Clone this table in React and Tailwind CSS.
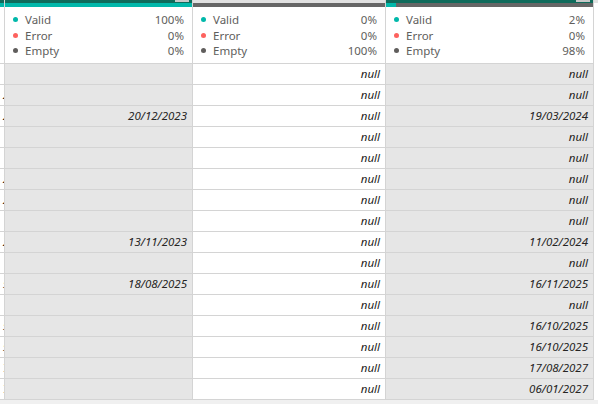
import React from 'react';

const font = { fontFamily: '"Noto Sans", "Open Sans", sans-serif' };

const col1 = ['', '', '20/12/2023', '', '', '', '', '', '13/11/2023', '', '18/08/2025', '', '', '', '', ''];
const col3 = [
  'null', 'null', '19/03/2024', 'null', 'null', 'null', 'null', 'null',
  '11/02/2024', 'null', '16/11/2025', 'null', '16/10/2025', '16/10/2025', '17/08/2027', '06/01/2027',
];
const edge = ['', '2', '2', '', '', '2', '2', '', '2', '', '5', '', '5', '5', '7', '7'];

const Stat = ({ dot, label, value }) => (
  <div className="flex items-center leading-[15.5px]">
    <span className={`mr-[7px] h-[5px] w-[5px] rounded-full ${dot}`} />
    <span className="flex-1">{label}</span>
    <span>{value}</span>
  </div>
);

const Column = ({ width, selected, bar, stats, cells }) => (
  <div className={`flex shrink-0 flex-col border-r border-[#d4d4d4] ${width}`}>
    <div className={`relative h-[3px] ${selected ? 'bg-[#0f6b5b]' : 'bg-[#e1e1e1]'}`}>
      {selected && <div className="absolute right-[3px] top-0 h-[2px] w-[14px] bg-[#c8c8c8]" />}
    </div>
    <div className="flex h-[4px] bg-[#666666]">{bar}</div>
    <div className="h-[57px] border-b border-[#d4d4d4] bg-white pl-[8px] pr-[8px] pt-[5px] text-[11.5px] text-[#605e5c]">
      {stats}
    </div>
    {cells.map((text, i) => (
      <div
        key={i}
        className={`flex h-[21px] items-center justify-end border-b border-[#d4d4d4] pr-[5px] text-[11.5px] italic text-[#252423] ${
          selected ? 'bg-[#e6e6e6]' : 'bg-white'
        }`}
      >
        {text}
      </div>
    ))}
  </div>
);

export default function App() {
  return (
    <div className="flex h-[404px] w-[598px] flex-col overflow-hidden bg-white" style={font}>
      <div className="flex">
        <div className="flex w-[5px] shrink-0 flex-col overflow-hidden border-r border-[#d4d4d4]">
          <div className="h-[3px] bg-[#0f6b5b]" />
          <div className="h-[4px] bg-[#01b8aa]" />
          <div className="h-[57px] border-b border-[#d4d4d4]" />
          {edge.map((d, i) => (
            <div
              key={i}
              className="flex h-[21px] items-center justify-end overflow-hidden border-b border-[#d4d4d4] pr-0 text-[11.5px] italic text-[#252423]"
            >
              <span className="-mr-[5px]">{d}</span>
            </div>
          ))}
        </div>

        <Column
          width="w-[188px]"
          selected
          bar={<div className="h-full w-full bg-[#01b8aa]" />}
          stats={
            <>
              <Stat dot="bg-[#01b8aa]" label="Valid" value="100%" />
              <Stat dot="bg-[#fd625e]" label="Error" value="0%" />
              <Stat dot="bg-[#605e5c]" label="Empty" value="0%" />
            </>
          }
          cells={col1}
        />

        <Column
          width="w-[193px]"
          bar={null}
          stats={
            <>
              <Stat dot="bg-[#01b8aa]" label="Valid" value="0%" />
              <Stat dot="bg-[#fd625e]" label="Error" value="0%" />
              <Stat dot="bg-[#605e5c]" label="Empty" value="100%" />
            </>
          }
          cells={Array(16).fill('null')}
        />

        <Column
          width="w-[208px]"
          selected
          bar={<div className="h-full w-[10px] bg-[#01b8aa]" />}
          stats={
            <>
              <Stat dot="bg-[#01b8aa]" label="Valid" value="2%" />
              <Stat dot="bg-[#fd625e]" label="Error" value="0%" />
              <Stat dot="bg-[#605e5c]" label="Empty" value="98%" />
            </>
          }
          cells={col3}
        />

        <div className="flex flex-1 flex-col">
          <div className="h-[3px] bg-[#e1e1e1]" />
        </div>
      </div>
      <div className="flex-1 bg-[#f0f0f0]" />
    </div>
  );
}
